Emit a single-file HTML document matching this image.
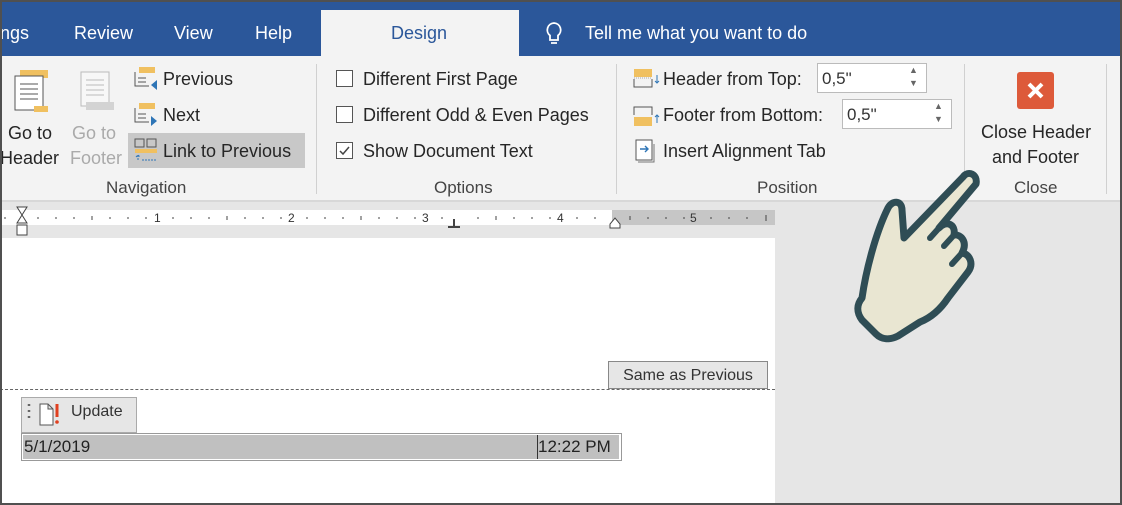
<!DOCTYPE html><html><head><style>
body{margin:0;width:1122px;height:505px;overflow:hidden;font-family:"Liberation Sans",sans-serif;position:relative;background:#e6e6e6}
.a{position:absolute;white-space:nowrap}
.t{color:#fff;font-size:18px;top:23px}
.r{color:#262626;font-size:18px}
.g{color:#444;font-size:17px}
.cb{position:absolute;width:15px;height:15px;border:1px solid #555;background:#fff}
.sp{position:absolute;background:#fff;border:1px solid #bbb;height:30px;font-size:17px;color:#333;line-height:30px;padding-left:4px;box-sizing:border-box}
.sep{position:absolute;top:64px;width:1px;height:130px;background:#d0d0d0}
</style></head><body>
<div class="a" style="left:0;top:0;width:1122px;height:56px;background:#2b579a"></div>
<div class="a" style="left:321px;top:10px;width:198px;height:46px;background:#f3f3f3"></div>
<div class="a t" style="left:0">ngs</div>
<div class="a t" style="left:74px">Review</div>
<div class="a t" style="left:174px">View</div>
<div class="a t" style="left:255px">Help</div>
<div class="a" style="left:391px;top:23px;font-size:18px;color:#2b579a">Design</div>
<svg class="a" style="left:543px;top:20px" width="22" height="28"><path d="M11 3a7 7 0 0 0-4 12.5V20h8v-4.5A7 7 0 0 0 11 3z M8 23h6" stroke="#fff" stroke-width="1.8" fill="none"/></svg>
<div class="a t" style="left:585px">Tell me what you want to do</div>
<div class="a" style="left:0;top:56px;width:1122px;height:144px;background:#f3f3f3"></div>
<svg class="a" style="left:12px;top:68px" width="40" height="48"><rect x="8" y="2" width="28" height="8" fill="#f0c060"/><rect x="3" y="8" width="28" height="34" fill="#fff" stroke="#555"/><path d="M8 16h18M8 21h18M8 26h18M8 31h18" stroke="#555"/><rect x="22" y="38" width="14" height="6" fill="#f0c060"/></svg>
<svg class="a" style="left:78px;top:68px" width="40" height="48" opacity=".35"><rect x="3" y="4" width="28" height="34" fill="#fff" stroke="#555"/><path d="M8 12h18M8 17h18M8 22h18M8 27h18" stroke="#555"/><rect x="8" y="34" width="28" height="8" fill="#999"/></svg>
<div class="a r" style="left:8px;top:123px">Go to</div>
<div class="a r" style="left:0;top:148px">Header</div>
<div class="a r" style="left:72px;top:123px;color:#aaa">Go to</div>
<div class="a r" style="left:70px;top:148px;color:#aaa">Footer</div>
<svg class="a" style="left:133px;top:66px" width="26" height="26"><rect x="6" y="1" width="16" height="6" fill="#f0c060"/><path d="M2 6v14h14M5 12h8M5 16h8" stroke="#555" fill="none"/><path d="M24 14v10l-6-5z" fill="#2e75b6"/></svg>
<svg class="a" style="left:133px;top:102px" width="26" height="26"><rect x="6" y="1" width="16" height="6" fill="#f0c060"/><path d="M2 6v14h14M5 12h8M5 16h8" stroke="#555" fill="none"/><path d="M18 14v10l6-5z" fill="#2e75b6"/></svg>
<div class="a" style="left:128px;top:133px;width:177px;height:35px;background:#c8c8c8"></div>
<svg class="a" style="left:134px;top:138px" width="24" height="24"><rect x="1" y="1" width="9" height="8" fill="none" stroke="#555"/><rect x="13" y="1" width="9" height="8" fill="none" stroke="#555"/><rect x="1" y="11" width="22" height="4" fill="#f0c060"/><path d="M4 22v-5M2 19l2-2 2 2M8 22h14" stroke="#2e75b6" stroke-dasharray="2 1" fill="none"/></svg>
<div class="a r" style="left:163px;top:69px">Previous</div>
<div class="a r" style="left:163px;top:105px">Next</div>
<div class="a r" style="left:163px;top:141px">Link to Previous</div>
<div class="a g" style="left:106px;top:178px">Navigation</div>
<div class="sep" style="left:316px"></div>
<div class="cb" style="left:336px;top:70px"></div>
<div class="cb" style="left:336px;top:106px"></div>
<div class="cb" style="left:336px;top:142px"></div>
<svg class="a" style="left:337px;top:143px" width="15" height="15"><path d="M3 8l3 3 6-7" stroke="#444" stroke-width="1.5" fill="none"/></svg>
<div class="a r" style="left:363px;top:69px">Different First Page</div>
<div class="a r" style="left:363px;top:105px">Different Odd &amp; Even Pages</div>
<div class="a r" style="left:363px;top:141px">Show Document Text</div>
<div class="a g" style="left:434px;top:178px">Options</div>
<div class="sep" style="left:616px"></div>
<svg class="a" style="left:633px;top:67px" width="28" height="26"><rect x="1" y="2" width="18" height="8" fill="#f0c060"/><path d="M1 12v8h18v-8" stroke="#555" fill="none"/><path d="M1 11h18" stroke="#aaa" stroke-dasharray="1 1"/><path d="M24 8v8M22 14l2 2 2-2" stroke="#2e75b6" fill="none"/></svg>
<svg class="a" style="left:633px;top:103px" width="28" height="26"><path d="M1 12v-8h18v8" stroke="#555" fill="none"/><rect x="1" y="14" width="18" height="9" fill="#f0c060"/><path d="M24 20v-8M22 14l2-2 2 2" stroke="#2e75b6" fill="none"/></svg>
<svg class="a" style="left:634px;top:138px" width="24" height="26"><rect x="2" y="2" width="16" height="20" fill="#fff" stroke="#555"/><path d="M4 24h16V6" stroke="#777" fill="none"/><path d="M6 11h7M11 8l3 3-3 3" stroke="#2e75b6" stroke-width="1.4" fill="none"/></svg>
<div class="a r" style="left:663px;top:69px">Header from Top:</div>
<div class="a r" style="left:663px;top:105px">Footer from Bottom:</div>
<div class="a r" style="left:663px;top:141px">Insert Alignment Tab</div>
<div class="sp" style="left:817px;top:63px;width:110px">0,5"</div>
<div class="sp" style="left:842px;top:99px;width:110px">0,5"</div>
<div class="a" style="left:909px;top:64px;font-size:9px;color:#666;line-height:13px">▲<br>▼</div>
<div class="a" style="left:934px;top:100px;font-size:9px;color:#666;line-height:13px">▲<br>▼</div>
<div class="a g" style="left:757px;top:178px">Position</div>
<div class="sep" style="left:964px"></div>
<div class="a" style="left:1017px;top:72px;width:37px;height:37px;background:#dd5a3a;border-radius:3px"></div>
<svg class="a" style="left:1017px;top:72px" width="37" height="37"><path d="M12 12l13 13M25 12L12 25" stroke="#fff" stroke-width="4"/></svg>
<div class="a r" style="left:981px;top:122px">Close Header</div>
<div class="a r" style="left:992px;top:147px">and Footer</div>
<div class="a g" style="left:1014px;top:178px">Close</div>
<div class="sep" style="left:1106px"></div>
<div class="a" style="left:0;top:200px;width:1122px;height:2px;background:#d8d8d8"></div>
<div class="a" style="left:0;top:210px;width:612px;height:15px;background:#fff"></div>
<div class="a" style="left:612px;top:210px;width:163px;height:15px;background:#c6c6c6"></div>
<svg class="a" style="left:0;top:205px" width="780" height="35" font-family="Liberation Sans" font-size="12" fill="#333">
<g stroke="#444">
<path d="M5 12v2M38 12v2M56 12v2M74 12v2M92 11v4M110 12v2M128 12v2M146 12v2M173 12v2M191 12v2M209 12v2M227 11v4M245 12v2M263 12v2M281 12v2M307 12v2M325 12v2M343 12v2M361 11v4M379 12v2M397 12v2M415 12v2M442 12v2M478 12v2M496 11v4M514 12v2M532 12v2M550 12v2M577 12v2M595 12v2M630 11v4M648 12v2M666 12v2M684 12v2M711 12v2M729 12v2M747 12v2M766 10v6"/>
<path d="M17 2h10l-5 8 5 8H17l5-8z M17 20h10v10H17z" fill="#fff"/>
<path d="M454 14v8M448 22h12" stroke-width="2"/>
<path d="M610 23h10v-4l-5-6-5 6z" fill="#fff"/></g>
<text x="154" y="17">1</text><text x="288" y="17">2</text><text x="422" y="17">3</text><text x="557" y="17">4</text><text x="690" y="17">5</text></svg>
<div class="a" style="left:0;top:238px;width:775px;height:267px;background:#fff"></div>
<div class="a" style="left:0;top:389px;width:775px;border-top:1px dashed #666"></div>
<div class="a" style="left:608px;top:361px;width:160px;height:28px;background:#e6e6e6;border:1px solid #888;box-sizing:border-box;font-size:16px;color:#333;line-height:27px;text-align:center">Same as Previous</div>
<div class="a" style="left:21px;top:397px;width:116px;height:36px;background:#e6e6e6;border:1px solid #aaa;box-sizing:border-box"></div>
<svg class="a" style="left:24px;top:400px" width="46" height="30"><path d="M5 4v2M5 10v2M5 16v2" stroke="#666" stroke-width="2.5"/><path d="M16 4h8l5 5v16H16z M24 4v5h5" fill="#fff" stroke="#555"/><path d="M33 4v13" stroke="#e04020" stroke-width="3"/><circle cx="33" cy="22" r="1.8" fill="#e04020"/></svg>
<div class="a" style="left:71px;top:403px;font-size:16px;color:#333">Update</div>
<div class="a" style="left:21px;top:433px;width:601px;height:28px;border:1px solid #999;box-sizing:border-box;background:#fff"></div>
<div class="a" style="left:23px;top:435px;width:596px;height:24px;background:#c0c0c0"></div>
<div class="a" style="left:537px;top:435px;width:1px;height:24px;background:#333"></div>
<div class="a" style="left:24px;top:437px;font-size:17px;color:#222">5/1/2019</div>
<div class="a" style="left:538px;top:437px;font-size:17px;color:#222">12:22 PM</div>
<svg class="a" style="left:840px;top:160px" width="145" height="190"><path d="M123 17C128 10 138 14 136 24L99 68C106 60 116 64 114 75C121 74 128 82 122 93C130 94 134 104 128 112L108 138C100 150 90 158 80 162L58 176C50 180 42 180 36 174L22 160C16 152 17 144 22 138C26 110 36 72 48 48C52 40 62 40 62 50L64 78Z" fill="#e9e6d2" stroke="#2f4d55" stroke-width="7" stroke-linejoin="round"/><path d="M99 68L90 78M114 75L104 86M122 93L112 104" stroke="#2f4d55" stroke-width="6" stroke-linecap="round"/></svg>
<div class="a" style="left:0;top:0;width:1118px;height:501px;border:2px solid #505050"></div>
</body></html>
